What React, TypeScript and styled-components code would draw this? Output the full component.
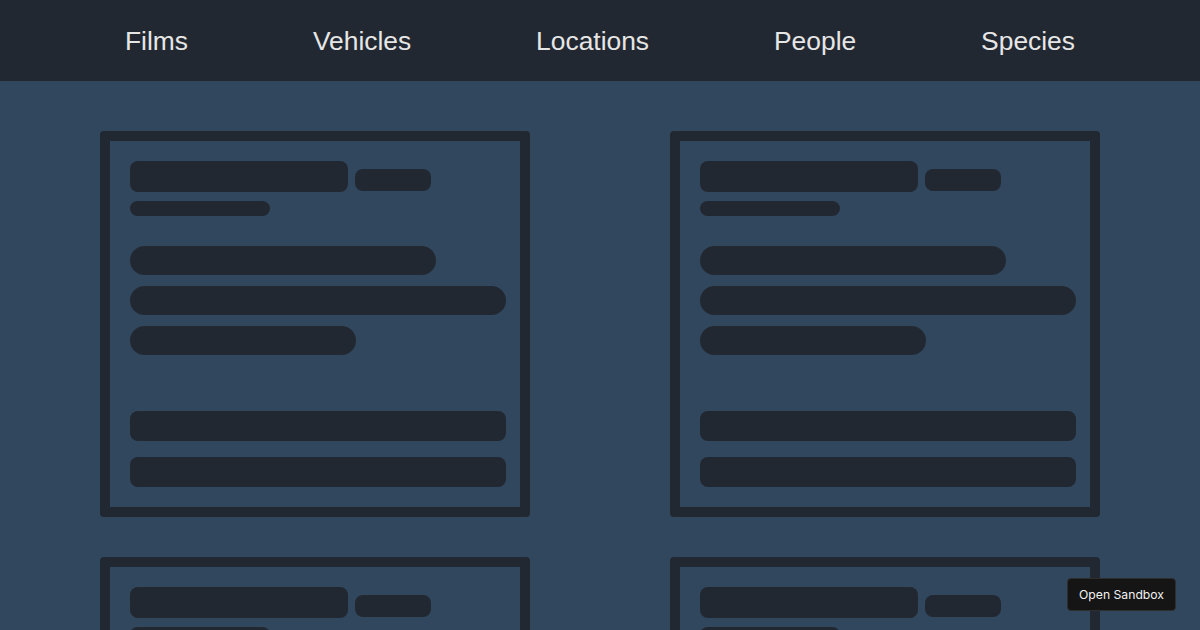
import React from "react";
import styled, { createGlobalStyle } from "styled-components";

const GlobalStyle = createGlobalStyle`
  * {
    box-sizing: border-box;
  }

  body {
    margin: 0;
    background-color: #30475e;
    font-family: "Liberation Sans", Arial, sans-serif;
  }
`;

const Nav = styled.nav`
  height: 81px;
  background-color: #222831;
  display: flex;
  justify-content: space-evenly;
  align-items: center;
`;

const NavLink = styled.a`
  color: #e6e6e6;
  font-size: 26.4px;
  text-decoration: none;
  line-height: 1;
  padding-top: 2px;
  cursor: pointer;
`;

const Grid = styled.main`
  max-width: 1000px;
  margin: 0 auto;
  padding: 50px 0;
  display: grid;
  grid-template-columns: repeat(2, 430px);
  column-gap: 140px;
  row-gap: 40px;
`;

const Card = styled.article`
  border: 10px solid #222831;
  border-radius: 4px;
  padding: 20px 14px 20px 20px;
  display: flex;
  flex-direction: column;
`;

const TitleRow = styled.div`
  display: flex;
  align-items: flex-end;
  gap: 7px;
`;

const Bone = styled.div<{ $w?: number; $h: number; $pill?: boolean }>`
  width: ${(p) => (p.$w ? `${p.$w}px` : "100%")};
  height: ${(p) => p.$h}px;
  border-radius: ${(p) => (p.$pill ? `${p.$h / 2}px` : "8px")};
  background-color: #222831;
  flex-shrink: 0;
`;

const Tag = styled(Bone)`
  margin-bottom: 1px;
`;

const Subtitle = styled(Bone)`
  margin-top: 9px;
`;

const Lines = styled.div`
  margin-top: 30px;
  display: flex;
  flex-direction: column;
  gap: 11px;
`;

const Blocks = styled.div`
  margin-top: 56px;
  display: flex;
  flex-direction: column;
  gap: 16px;
`;

const SandboxButton = styled.button`
  position: fixed;
  right: 24px;
  bottom: 19px;
  height: 33px;
  padding: 0 11px;
  background-color: #151515;
  border: 1px solid #2e2e2e;
  border-radius: 4px;
  color: #f2f2f2;
  font-family: Inter, "Liberation Sans", sans-serif;
  font-size: 12.2px;
  cursor: pointer;
`;

const links = ["Films", "Vehicles", "Locations", "People", "Species"];

const SkeletonCard: React.FC = () => (
  <Card>
    <TitleRow>
      <Bone $w={218} $h={31} />
      <Tag $w={76} $h={22} />
    </TitleRow>
    <Subtitle $w={140} $h={15} $pill />
    <Lines>
      <Bone $w={306} $h={29} $pill />
      <Bone $w={376} $h={29} $pill />
      <Bone $w={226} $h={29} $pill />
    </Lines>
    <Blocks>
      <Bone $w={376} $h={30} />
      <Bone $w={376} $h={30} />
    </Blocks>
  </Card>
);

export default function App() {
  return (
    <>
      <GlobalStyle />
      <Nav>
        {links.map((l) => (
          <NavLink key={l}>{l}</NavLink>
        ))}
      </Nav>
      <Grid>
        {[0, 1, 2, 3].map((i) => (
          <SkeletonCard key={i} />
        ))}
      </Grid>
      <SandboxButton>Open Sandbox</SandboxButton>
    </>
  );
}
